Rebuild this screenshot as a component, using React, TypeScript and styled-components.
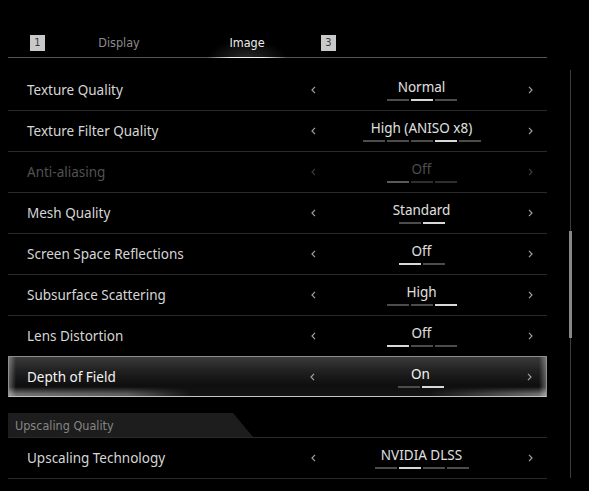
import React from 'react';
import styled, { createGlobalStyle } from 'styled-components';

const GlobalStyle = createGlobalStyle`
    html, body {
        margin: 0;
        padding: 0;
        background: #000;
    }
    body {
        font-family: "Noto Sans", "Open Sans", sans-serif;
        -webkit-font-smoothing: antialiased;
    }
`

type Setting = {
    label: string;
    value: string;
    steps: number;
    active: number;
    disabled?: boolean;
}

const settings: Setting[] = [
    { label: "Texture Quality", value: "Normal", steps: 3, active: 1 },
    { label: "Texture Filter Quality", value: "High (ANISO x8)", steps: 5, active: 3 },
    { label: "Anti-aliasing", value: "Off", steps: 3, active: 0, disabled: true },
    { label: "Mesh Quality", value: "Standard", steps: 2, active: 1 },
    { label: "Screen Space Reflections", value: "Off", steps: 2, active: 0 },
    { label: "Subsurface Scattering", value: "High", steps: 3, active: 2 },
    { label: "Lens Distortion", value: "Off", steps: 3, active: 0 },
]

const Chevron: React.FC<{ dir: 'left' | 'right'; dim?: boolean }> = ({ dir, dim }) => (
    <ChevronBox>
        <svg width="5" height="8" viewBox="0 0 5 8">
            <path
                d={dir === 'left' ? "M4 0.8 L1 4 L4 7.2" : "M1 0.8 L4 4 L1 7.2"}
                fill="none"
                stroke={dim ? "#3c3c3c" : "#a0a0a0"}
                strokeWidth="1.2"
            />
        </svg>
    </ChevronBox>
)

const SettingRow: React.FC<{ s: Setting; selected?: boolean }> = ({ s, selected }) => {
    const Wrapper = selected ? SelectedRow : Row;
    return (
        <Wrapper>
            <Label $disabled={s.disabled} $selected={selected}>{s.label}</Label>
            <Selector>
                <Chevron dir="left" dim={s.disabled} />
                <ValueBlock>
                    <Value $disabled={s.disabled} $selected={selected}>{s.value}</Value>
                    <Steps>
                        {new Array(s.steps).fill(undefined).map((_, i) => (
                            <Step key={i} $on={i === s.active} $disabled={s.disabled} />
                        ))}
                    </Steps>
                </ValueBlock>
                <Chevron dir="right" dim={s.disabled} />
            </Selector>
        </Wrapper>
    )
}

const App: React.FC = () => {
    return (
        <Page>
            <GlobalStyle />
            <Main>
                <TabBar>
                    <KeyHint>1</KeyHint>
                    <Tab>Display</Tab>
                    <Tab $active>Image</Tab>
                    <KeyHint>3</KeyHint>
                </TabBar>
                <List>
                    {settings.map((s) => (
                        <SettingRow key={s.label} s={s} />
                    ))}
                    <SettingRow selected s={{ label: "Depth of Field", value: "On", steps: 2, active: 1 }} />
                    <SectionHeader>
                        <SectionTag>Upscaling Quality</SectionTag>
                    </SectionHeader>
                    <SettingRow s={{ label: "Upscaling Technology", value: "NVIDIA DLSS", steps: 4, active: 1 }} />
                </List>
            </Main>
            <ScrollTrack>
                <ScrollThumb />
            </ScrollTrack>
        </Page>
    )
}

const Page = styled.div`
    width: 589px;
    height: 491px;
    overflow: hidden;
    background: #000;
    display: flex;
    align-items: flex-start;
`

const Main = styled.div`
    width: 539px;
    margin-left: 8px;
`

const TabBar = styled.div`
    height: 58px;
    box-sizing: border-box;
    display: flex;
    align-items: flex-end;
    padding: 0 0 6px 22px;
    border-bottom: 1px solid #555;
`

const KeyHint = styled.div`
    width: 15px;
    height: 16px;
    margin: 0 10px;
    background: #c9c9c9;
    color: #3a3a3a;
    font-family: "DejaVu Sans", sans-serif;
    font-stretch: condensed;
    font-size: 11px;
    line-height: 16px;
    text-align: center;

    &:first-child {
        margin-left: 0;
    }
`

const Tab = styled.div<{ $active?: boolean }>`
    position: relative;
    width: 128px;
    height: 16px;
    line-height: 16px;
    text-align: center;
    font-family: "DejaVu Sans", sans-serif;
    font-stretch: condensed;
    font-size: 12.5px;
    color: ${(p) => (p.$active ? '#ececec' : '#8c8c8c')};

    &::before {
        content: '';
        display: ${(p) => (p.$active ? 'block' : 'none')};
        position: absolute;
        left: 50%;
        bottom: -7px;
        width: 100px;
        height: 22px;
        transform: translateX(-50%);
        background: radial-gradient(ellipse 50% 100% at 50% 100%, rgba(255, 255, 255, 0.16), transparent 80%);
    }

    &::after {
        content: '';
        display: ${(p) => (p.$active ? 'block' : 'none')};
        position: absolute;
        left: 50%;
        bottom: -7px;
        width: 80px;
        height: 1px;
        transform: translateX(-50%);
        background: linear-gradient(to right, transparent, #f2f2f2 30%, #f2f2f2 70%, transparent);
    }
`

const List = styled.div`
    margin-top: 12px;
    display: flex;
    flex-direction: column;
`

const Row = styled.div`
    height: 40px;
    display: flex;
    align-items: center;
    border-bottom: 1px solid #2a2a2a;
`

const SelectedRow = styled.div`
    position: relative;
    height: 41px;
    margin-top: -1px;
    box-sizing: border-box;
    display: flex;
    align-items: center;
    border: 1px solid #8e8e8e;
    border-bottom-color: #c4c4c4;
    background:
        linear-gradient(to right, rgba(255, 255, 255, 0.32), transparent 1.3%, transparent 98.7%, rgba(255, 255, 255, 0.32)),
        linear-gradient(to bottom, #3a3a3a, #1f1f1f 38%, #0f0f0f 72%, #141414);

    &::after {
        content: '';
        position: absolute;
        left: 0;
        right: 0;
        bottom: 0;
        height: 9px;
        pointer-events: none;
        background: linear-gradient(
            to right,
            rgba(255, 255, 255, 0.4),
            rgba(255, 255, 255, 0.32) 22%,
            transparent 34%,
            transparent 78%,
            rgba(255, 255, 255, 0.3) 94%,
            rgba(255, 255, 255, 0.42)
        );
        -webkit-mask-image: linear-gradient(to top, #000 20%, transparent);
        mask-image: linear-gradient(to top, #000 20%, transparent);
    }
`

const Label = styled.div<{ $disabled?: boolean; $selected?: boolean }>`
    flex: 1;
    padding-left: ${(p) => (p.$selected ? '18px' : '19px')};
    font-size: 13.5px;
    color: ${(p) => (p.$disabled ? '#525252' : p.$selected ? '#f4f4f4' : '#d6d6d6')};
`

const Selector = styled.div`
    width: 237px;
    margin-right: 7px;
    display: flex;
    align-items: center;
`

const ChevronBox = styled.div`
    width: 20px;
    display: flex;
    justify-content: center;
    align-items: center;
`

const ValueBlock = styled.div`
    flex: 1;
    display: flex;
    flex-direction: column;
    align-items: center;
`

const Value = styled.div<{ $disabled?: boolean; $selected?: boolean }>`
    font-size: 13.5px;
    line-height: 16px;
    color: ${(p) => (p.$disabled ? '#4e4e4e' : p.$selected ? '#f6f6f6' : '#e0e0e0')};
`

const Steps = styled.div`
    margin-top: 4px;
    display: flex;
    gap: 2px;
`

const Step = styled.div<{ $on?: boolean; $disabled?: boolean }>`
    width: 22px;
    height: 2px;
    background: ${(p) =>
        p.$disabled ? (p.$on ? '#5a5a5a' : '#2e2e2e') : p.$on ? '#d8d8d8' : '#4c4c4c'};
`

const SectionHeader = styled.div`
    margin-top: 16px;
    border-bottom: 1px solid #2a2a2a;
`

const SectionTag = styled.div`
    width: 245px;
    height: 24px;
    box-sizing: border-box;
    padding-left: 7px;
    background: #1d1d1d;
    clip-path: polygon(0 0, calc(100% - 20px) 0, 100% 100%, 0 100%);
    font-family: "DejaVu Sans", sans-serif;
    font-stretch: condensed;
    font-size: 12.5px;
    line-height: 25px;
    color: #858585;
`

const ScrollTrack = styled.div`
    width: 3px;
    height: 408px;
    margin: 70px 0 0 22px;
    background: linear-gradient(to right, transparent 1px, #3e3e3e 1px, #3e3e3e 2px, transparent 2px);
`

const ScrollThumb = styled.div`
    margin-top: 161px;
    height: 107px;
    background: #878787;
`

export default App;
